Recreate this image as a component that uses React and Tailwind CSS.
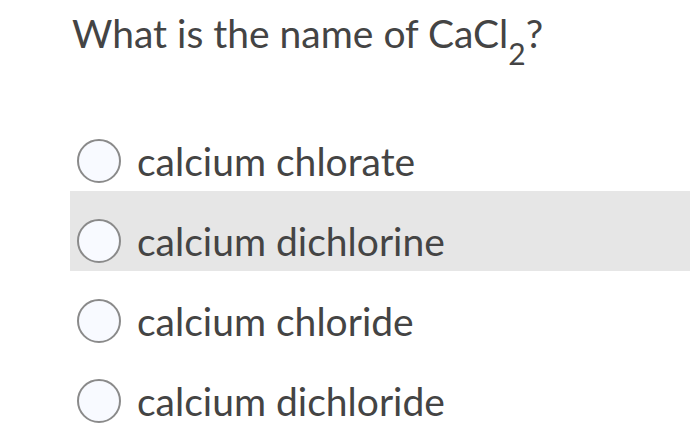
const options = ["calcium chlorate", "calcium dichlorine", "calcium chloride", "calcium dichloride"];

export default function App() {
  return (
    <div className="w-[690px] h-[448px] bg-white overflow-hidden text-[#444444]" style={{ fontFamily: "Lato, sans-serif" }}>
      <h1 className="pl-[72px] pt-[10px] text-[39px] leading-[46px] h-[56px]">
        What is the name of CaCl<sub className="text-[30px] align-[-9px] leading-none">2</sub>?
      </h1>
      <div className="mt-[55px] ml-[70px] flex flex-col">
        {options.map((o, i) => (
          <div key={o} className={"h-[80px] flex items-start pt-[28px] pl-[7px] " + (i === 1 ? "bg-[#e6e6e6]" : "")}>
            <span className="w-[44px] h-[44px] rounded-full border-2 border-[#8a8a8a] bg-[#f8faff] shrink-0" />
            <span className="ml-[16px] text-[39px] leading-[44px]">{o}</span>
          </div>
        ))}
      </div>
    </div>
  );
}
